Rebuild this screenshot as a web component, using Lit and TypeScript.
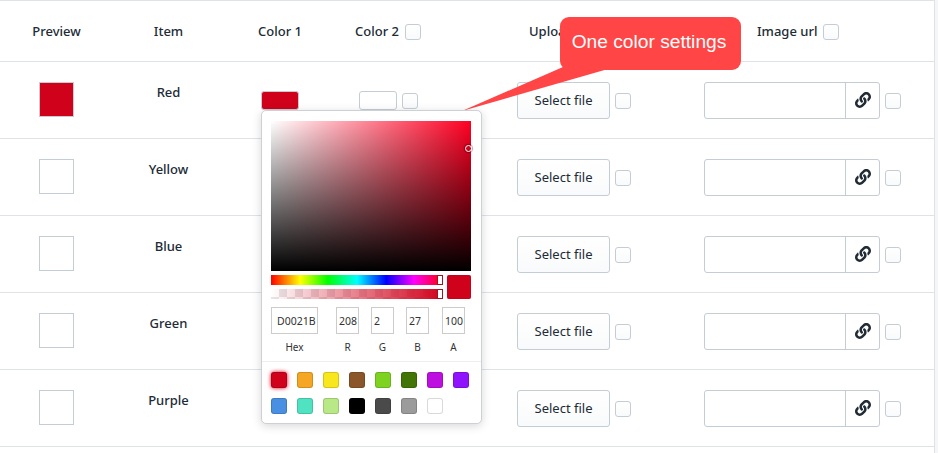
import { LitElement, html, css, svg } from "lit";
import { customElement } from "lit/decorators.js";

const LINK = svg`<path d="M326.612 185.391c59.747 59.809 58.927 155.698.36 214.59-.11.12-.24.25-.36.37l-67.2 67.2c-59.27 59.27-155.699 59.262-214.96 0-59.27-59.26-59.27-155.7 0-214.96l37.106-37.106c9.84-9.84 26.786-3.3 27.294 10.606.648 17.722 3.826 35.527 9.69 52.721 1.986 5.822.567 12.262-3.783 16.612l-13.087 13.087c-28.026 28.026-28.905 73.66-1.155 101.96 28.024 28.579 74.086 28.749 102.325.51l67.2-67.19c28.191-28.191 28.073-73.757 0-101.83-3.701-3.694-7.429-6.564-10.341-8.569a16.037 16.037 0 0 1-6.947-12.606c-.396-10.567 3.348-21.456 11.698-29.806l21.054-21.055c5.521-5.521 14.182-6.199 20.584-1.731a152.482 152.482 0 0 1 20.522 17.197zM467.547 44.449c-59.261-59.262-155.69-59.27-214.96 0l-67.2 67.2c-.12.12-.25.25-.36.37-58.566 58.892-59.387 154.781.36 214.59a152.454 152.454 0 0 0 20.521 17.196c6.402 4.468 15.064 3.789 20.584-1.731l21.054-21.055c8.35-8.35 12.094-19.239 11.698-29.806a16.037 16.037 0 0 0-6.947-12.606c-2.912-2.005-6.64-4.875-10.341-8.569-28.073-28.073-28.191-73.639 0-101.83l67.2-67.19c28.239-28.239 74.3-28.069 102.325.51 27.75 28.3 26.872 73.934-1.155 101.96l-13.087 13.087c-4.35 4.35-5.769 10.79-3.783 16.612 5.864 17.194 9.042 34.999 9.69 52.721.509 13.906 17.454 20.446 27.294 10.606l37.106-37.106c59.271-59.259 59.271-155.699.001-214.959z"/>`;

const ITEMS = ["Red", "Yellow", "Blue", "Green", "Purple"];
const PRESETS = ["#D0021B","#F5A623","#F8E71C","#8B572A","#7ED321","#417505","#BD10E0","#9013FE","#4A90E2","#50E3C2","#B8E986","#000000","#4A4A4A","#9B9B9B","#FFFFFF"];
const FIELDS = [["D0021B","Hex"],["208","R"],["2","G"],["27","B"],["100","A"]];

@customElement("app-root")
export class AppRoot extends LitElement {
  static styles = css`
    :host { display: block; position: relative; width: 938px; height: 453px; overflow: hidden;
      background: #f4f6f8; font-family: "Noto Sans", sans-serif; font-size: 13px; color: #212b36; }
    * { box-sizing: border-box; }
    .table { width: 935px; height: 453px; background: #fff; border-top: 1px solid #dfe3e8; border-right: 1px solid #dfe3e8; }
    .row { display: grid; grid-template-columns: 113px 111px 112px 104px 250px 244px; height: 77px; border-bottom: 1px solid #dfe3e8; }
    .head { height: 61px; font-weight: 500; }
    .cell { display: flex; align-items: center; justify-content: center; gap: 5px; }
    .head .cell { gap: 6px; }
    .check { width: 16px; height: 16px; border: 1px solid #c4cdd5; border-radius: 3px; background: linear-gradient(#fff, #f9fafb); flex: none; margin-top: 1px; }
    .head .check { margin-top: 2px; }
    .start { justify-content: flex-start; }
    .h5 { padding-left: 89px; }
    .h6 { padding-left: 67px; }
    .r5 { padding-left: 77px; }
    .r6 { padding-left: 14px; }
    .preview { width: 35px; height: 35px; border: 1px solid #c4cdd5; background: #fff; margin-bottom: 1px; }
    .preview.red { background: #d0021b; }
    .name { font-weight: 500; padding-bottom: 16px; }
    .sw { width: 38px; height: 19px; border: 1px solid #c4cdd5; border-radius: 3px; background: #fff; }
    .sw.red { background: #d0021b; }
    .btn { width: 93px; height: 37px; border: 1px solid #c4cdd5; border-radius: 3px; background: linear-gradient(#fff, #f9fafb);
      display: flex; align-items: center; justify-content: center; color: #212b36; }
    .url { width: 176px; height: 37px; border: 1px solid #c4cdd5; border-radius: 3px; background: #fff; display: flex; justify-content: flex-end; }
    .link { width: 34px; border-left: 1px solid #c4cdd5; display: flex; align-items: center; justify-content: center; }
    .link svg { width: 16px; height: 16px; fill: #212b36; }

    .tail { position: absolute; left: 460px; top: 60px; width: 150px; height: 55px; }
    .callout { position: absolute; left: 560px; top: 17px; width: 181px; height: 53px; background: #ff4545; border-radius: 9px;
      color: #fff; font: 19.2px "Liberation Sans", Arial, sans-serif; display: flex; align-items: center; justify-content: center; padding: 0 3px 3px 0; }

    .picker { position: absolute; left: 261px; top: 110px; width: 221px; height: 314px; background: #fff; border: 1px solid #cdd1d6; border-radius: 5px;
      box-shadow: 0 2px 10px rgba(0,0,0,.16); padding: 10px 10px 0 9px; }
    .sat { position: relative; height: 150px; background: linear-gradient(to top, #000, rgba(0,0,0,0)), linear-gradient(to right, #fff, #ff0022); }
    .cursor { position: absolute; left: 194px; top: 24px; width: 7px; height: 7px; border: 1.5px solid #fff; border-radius: 50%; box-shadow: 0 0 1px 1px rgba(0,0,0,.35); }
    .sliders { display: flex; gap: 4px; margin-top: 4px; }
    .bars { width: 172px; display: flex; flex-direction: column; gap: 4px; }
    .bar { position: relative; height: 10px; }
    .hue { background: linear-gradient(to right, #f00 0%, #ff0 17%, #0f0 33%, #0ff 50%, #00f 67%, #f0f 83%, #f00 100%); }
    .alpha { background: linear-gradient(to right, rgba(208,2,27,0), #d0021b), repeating-conic-gradient(#e6e6e6 0 25%, #fff 0 50%) 0 0 / 16px 16px; }
    .handle { position: absolute; right: 0; top: 0; width: 6px; height: 10px; background: #fff; border: 1px solid #a8101f; }
    .current { width: 24px; height: 24px; background: #d0021b; border-radius: 2px; box-shadow: inset 0 0 1px rgba(0,0,0,.4); }
    .fields { display: grid; grid-template-columns: 65px 35px 35px 36px 23px; margin-top: 8px; }
    .field { display: flex; flex-direction: column; align-items: center; width: 23px; }
    .field:first-child { width: 47px; }
    .field:first-child .in { padding-left: 5px; padding-right: 5px; }
    .field .in { width: 100%; height: 27px; border: 1px solid #ccc; font-size: 10.5px; padding-left: 2px; display: flex; align-items: center; overflow: hidden; white-space: nowrap; color: #333; }
    .field .lab { font-size: 10px; line-height: 14px; margin-top: 6px; color: #333; }
    .divider { height: 1px; background: #eee; margin: 7px -10px 10px -9px; }
    .presets { display: grid; grid-template-columns: repeat(8, 16px); gap: 10px; }
    .p { width: 16px; height: 16px; border-radius: 3px; box-shadow: inset 0 0 0 1px rgba(0,0,0,.15); }
    .p.sel { box-shadow: inset 0 0 0 1px rgba(0,0,0,.15), 0 0 4px #d0021b; }
  `;

  render() {
    return html`
      <div class="table">
        <div class="row head">
          <div class="cell">Preview</div>
          <div class="cell">Item</div>
          <div class="cell">Color 1</div>
          <div class="cell">Color 2 <span class="check"></span></div>
          <div class="cell start h5">Upload</div>
          <div class="cell start h6">Image url <span class="check"></span></div>
        </div>
        ${ITEMS.map((n, i) => html`
          <div class="row">
            <div class="cell"><div class="preview ${i === 0 ? "red" : ""}"></div></div>
            <div class="cell"><div class="name">${n}</div></div>
            <div class="cell">${i === 0 ? html`<div class="sw red"></div>` : ""}</div>
            <div class="cell">${i === 0 ? html`<div class="sw"></div><span class="check"></span>` : ""}</div>
            <div class="cell start r5"><div class="btn">Select file</div><span class="check"></span></div>
            <div class="cell start r6"><div class="url"><div class="link"><svg viewBox="0 0 512 512">${LINK}</svg></div></div><span class="check"></span></div>
          </div>`)}
      </div>

      <svg class="tail" viewBox="0 0 150 55"><polygon points="2,51 103,7 148,9" fill="#ff4545"/></svg>
      <div class="callout">One color settings</div>

      <div class="picker">
        <div class="sat"><div class="cursor"></div></div>
        <div class="sliders">
          <div class="bars">
            <div class="bar hue"><div class="handle"></div></div>
            <div class="bar alpha"><div class="handle"></div></div>
          </div>
          <div class="current"></div>
        </div>
        <div class="fields">
          ${FIELDS.map(([v, l]) => html`<div class="field"><div class="in">${v}</div><div class="lab">${l}</div></div>`)}
        </div>
        <div class="divider"></div>
        <div class="presets">
          ${PRESETS.map((c, i) => html`<div class="p ${i === 0 ? "sel" : ""}" style="background:${c}"></div>`)}
        </div>
      </div>
    `;
  }
}
